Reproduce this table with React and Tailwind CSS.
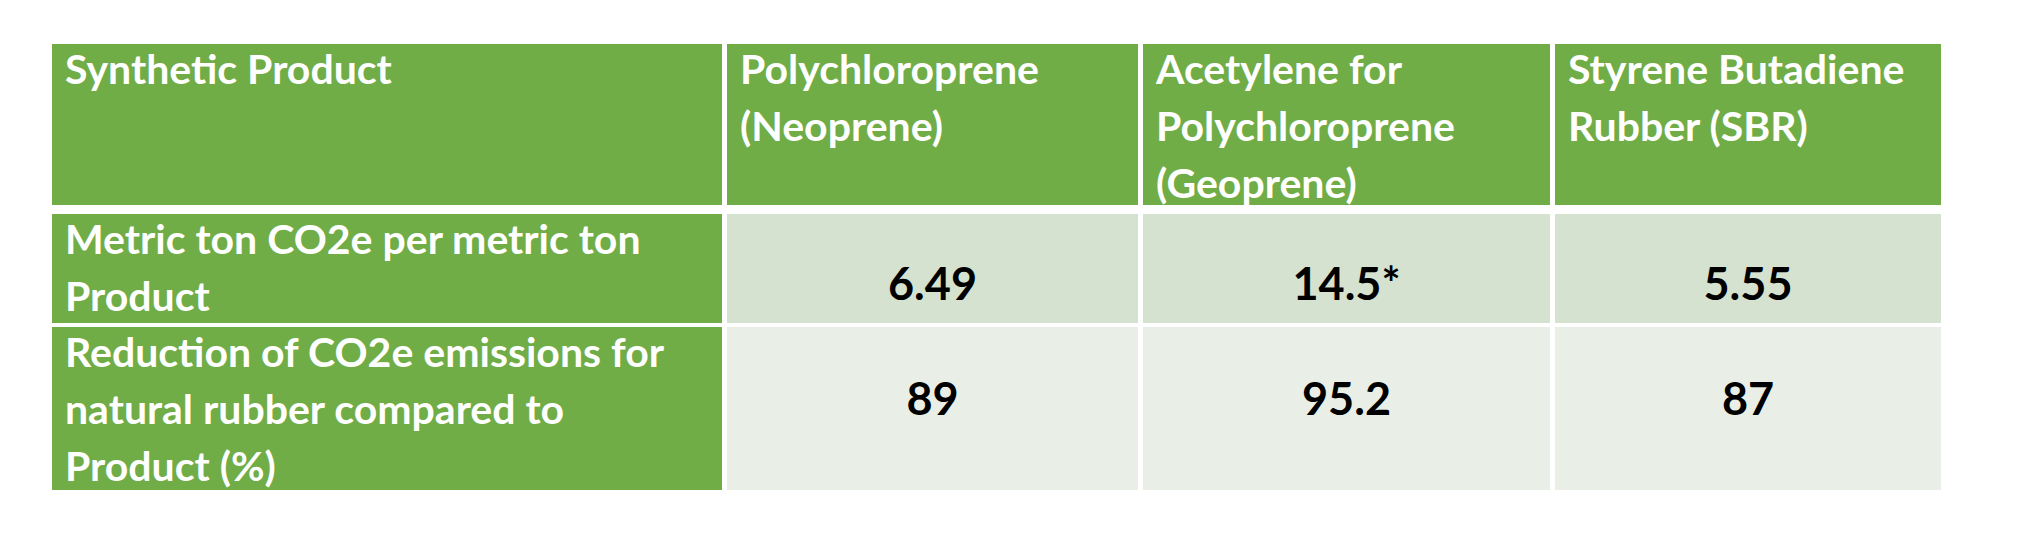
import React from "react";

const columns = [
    { w: "w-[670px]", label: ["Synthetic Product"] },
    { w: "w-[411px]", label: ["Polychloroprene", "(Neoprene)"] },
    { w: "w-[407px]", label: ["Acetylene for", "Polychloroprene", "(Geoprene)"] },
    { w: "w-[386px]", label: ["Styrene Butadiene", "Rubber (SBR)"] },
];

const rows = [
    {
        label: ["Metric ton CO2e per metric ton", "Product"],
        values: ["6.49", "14.5*", "5.55"],
        height: "h-[109px]",
        fill: "bg-[#d5e2cf]",
        pad: "pt-[42px]",
        gap: "mb-[4px]",
    },
    {
        label: ["Reduction of CO2e emissions for", "natural rubber compared to", "Product (%)"],
        values: ["89", "95.2", "87"],
        height: "h-[163px]",
        fill: "bg-[#e9efe6]",
        pad: "pt-[44px]",
        gap: "",
    },
];

const Lines = ({ lines }) => (
    <div className="-mt-[4px] whitespace-nowrap">
        {lines.map((line, i) => (
            <div key={i}>{line}</div>
        ))}
    </div>
);

const App = () => {
    return (
        <div className="w-full h-[541px] bg-white pt-[44px] pl-[52px] font-[Lato,sans-serif] font-bold">
            {/* header */}
            <div className="flex gap-x-[5px] h-[161px] mb-[9px]">
                {columns.map((col, i) => (
                    <div
                        key={i}
                        className={`${col.w} h-full overflow-hidden bg-[#70ad47] px-[13px] text-white text-[41px] leading-[57px]`}
                    >
                        <Lines lines={col.label} />
                    </div>
                ))}
            </div>

            {rows.map((row, r) => (
                <div key={r} className={`flex gap-x-[5px] ${row.height} ${row.gap}`}>
                    <div className="w-[670px] h-full overflow-hidden bg-[#70ad47] px-[13px] text-white text-[41px] leading-[57px]">
                        <Lines lines={row.label} />
                    </div>
                    {row.values.map((v, i) => (
                        <div
                            key={i}
                            className={`${columns[i + 1].w} h-full ${row.fill} ${row.pad} text-center text-black text-[45px] leading-[54px]`}
                        >
                            {v}
                        </div>
                    ))}
                </div>
            ))}
        </div>
    );
};

export default App;
